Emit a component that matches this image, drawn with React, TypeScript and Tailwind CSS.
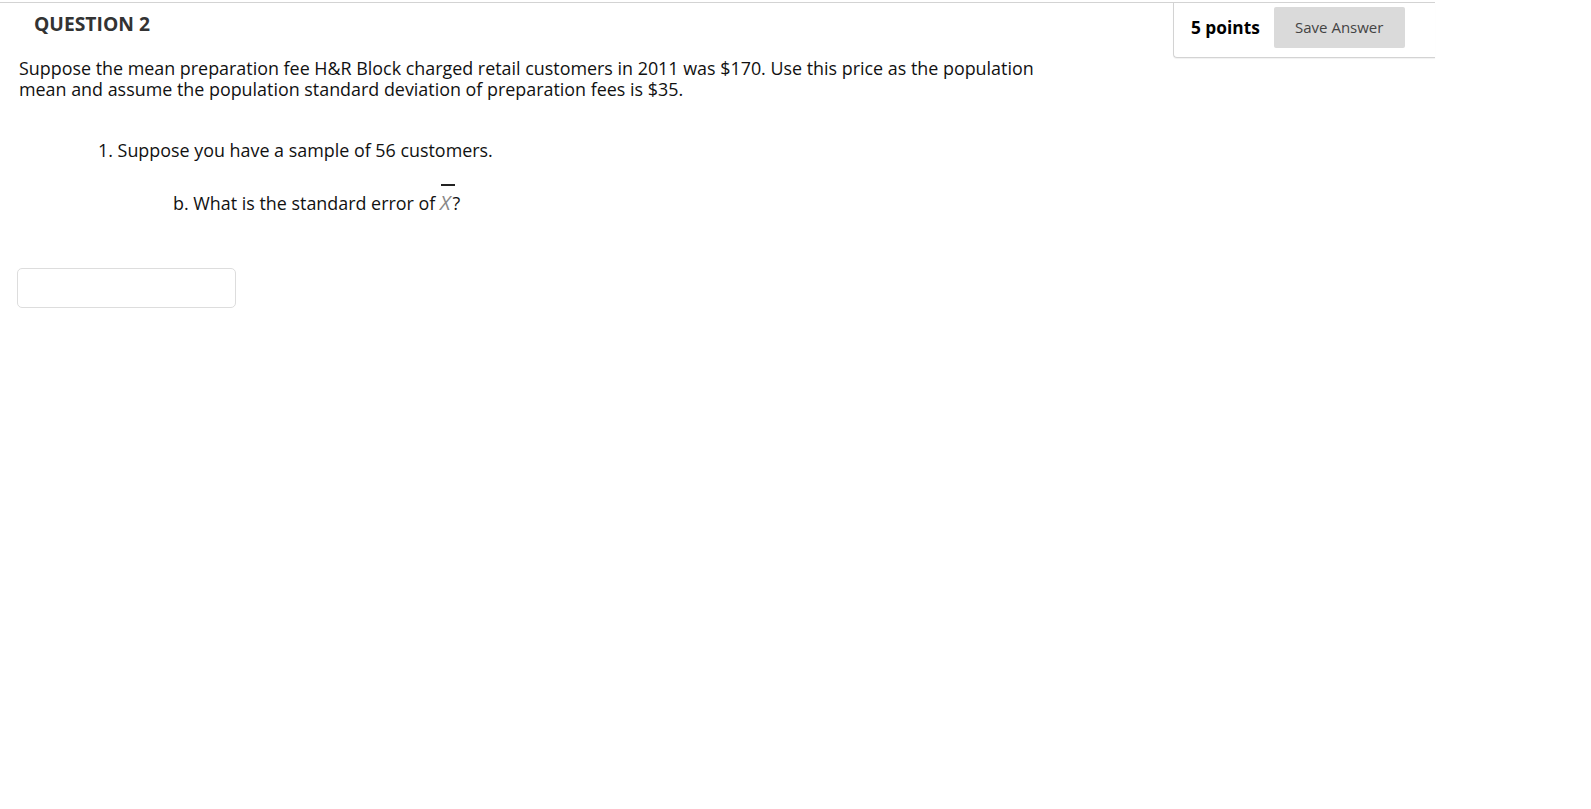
import React from "react";

export default function App() {
  return (
    <div className="min-h-[809px] w-full bg-white text-[#111] [font-family:'Open_Sans',sans-serif]">
      <div className="mt-[2px] w-[1435px] border-t border-[#d3d3d3] flex justify-between items-start">
        <h2 className="pl-[34px] pt-[8px] text-[19.3px] leading-[26px] font-bold text-[#333]">QUESTION 2</h2>
        <div className="w-[262px] h-[55px] border-l border-b border-[#d3d3d3] rounded-bl-[4px] shadow-[0_1px_1px_rgba(0,0,0,0.06)] flex items-start pt-[4px] pl-[17px]">
          <div className="h-[41px] flex items-center text-[17.3px] font-bold text-black">5 points</div>
          <button className="ml-[14px] h-[41px] w-[131px] rounded-[2px] bg-[#dadada] text-[15px] text-[#444] flex items-center justify-center">Save Answer</button>
        </div>
      </div>
      <p className="px-[19px] text-[17.9px] leading-[21px] max-w-[1080px]">
        Suppose the mean preparation fee H&amp;R Block charged retail customers in 2011 was $170. Use this price as the population mean and assume the population standard deviation of preparation fees is $35.
      </p>
      <div className="pl-[98px] mt-[40px] text-[17.9px] leading-[21px]">1. Suppose you have a sample of 56 customers.</div>
      <div className="pl-[173px] mt-[31px] h-[22px] text-[17.9px] leading-[21px]">
        b. What is the standard error of{" "}
        <span className="relative inline-block leading-[21px]">
          <span className="absolute left-[1px] w-[14px] top-[-8px] h-[2px] bg-[#222]"></span>
          <span className="italic text-[20px] leading-[21px] text-[#888] pr-[2px]">X</span>
        </span>
        ?
      </div>
      <div className="ml-[17px] mt-[54px] w-[219px] h-[40px] border border-[#ddd] rounded-[5px]"></div>
    </div>
  );
}
